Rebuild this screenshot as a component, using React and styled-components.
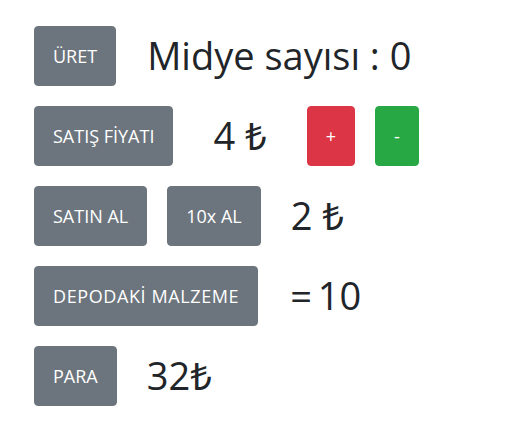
import React, { useState } from 'react'
import styled, { createGlobalStyle } from 'styled-components'

const GlobalStyle = createGlobalStyle`
  body {
    margin: 0;
    background: #fff;
    font-family: "Open Sans", "Noto Sans", sans-serif;
    color: #212529;
  }
`

const Page = styled.div`
  display: flex;
  flex-direction: column;
  gap: 20px;
  padding: 26px 34px;
`

const Row = styled.div`
  display: flex;
  align-items: center;
  gap: ${(p) => p.gap || 20}px;
`

const Button = styled.button`
  font-family: "Open Sans", "Noto Sans", sans-serif;
  font-size: 18px;
  line-height: 24px;
  letter-spacing: ${(p) => p.ls || 0}px;
  padding: 17px 18px;
  border: 1px solid ${(p) => p.bg || '#6c757d'};
  border-radius: 4px;
  background-color: ${(p) => p.bg || '#6c757d'};
  color: #fff;
  cursor: pointer;
`

const Value = styled.span`
  font-size: 38px;
  line-height: 1.2;
  margin-left: ${(p) => p.ml || 0}px;
  margin-right: ${(p) => p.mr || 0}px;
`

const Equals = styled.span`
  margin-right: 6px;
`

const App = () => {
  const [midye, setMidye] = useState(0)
  const [fiyat, setFiyat] = useState(4)
  const [malzeme, setMalzeme] = useState(10)
  const [para, setPara] = useState(32)

  return (
    <>
      <GlobalStyle />
      <Page>
        <Row gap={31}>
          <Button
            onClick={() => {
              if (malzeme > 0) {
                setMidye(midye + 1)
                setMalzeme(malzeme - 1)
              }
            }}
          >
            ÜRET
          </Button>
          <Value>Midye sayısı : {midye}</Value>
        </Row>
        <Row gap={20}>
          <Button>SATIŞ FİYATI</Button>
          <Value ml={20} mr={20}>{fiyat} ₺</Value>
          <Button bg="#dc3545" onClick={() => setFiyat(fiyat + 1)}>+</Button>
          <Button bg="#28a745" onClick={() => setFiyat(Math.max(0, fiyat - 1))}>-</Button>
        </Row>
        <Row gap={20}>
          <Button onClick={() => { if (para >= 2) { setPara(para - 2); setMalzeme(malzeme + 1) } }}>SATIN AL</Button>
          <Button onClick={() => { if (para >= 20) { setPara(para - 20); setMalzeme(malzeme + 10) } }}>10x AL</Button>
          <Value ml={10}>2 ₺</Value>
        </Row>
        <Row gap={32}>
          <Button ls={0.6}>DEPODAKİ MALZEME</Button>
          <Value><Equals>=</Equals>{malzeme}</Value>
        </Row>
        <Row gap={30}>
          <Button>PARA</Button>
          <Value>{para}₺</Value>
        </Row>
      </Page>
    </>
  )
}

export default App
